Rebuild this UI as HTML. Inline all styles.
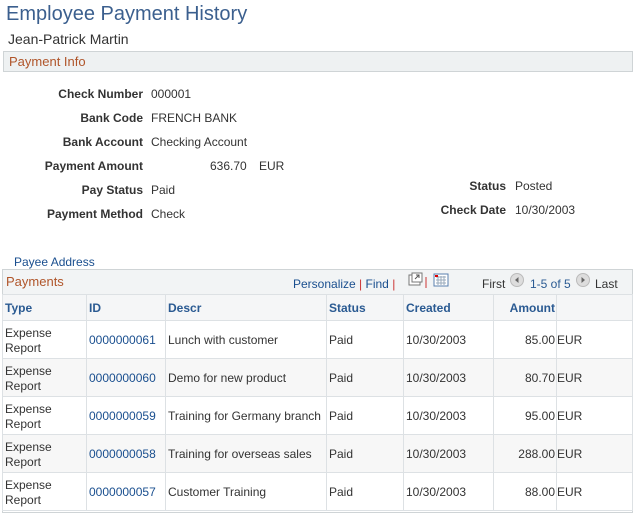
<!DOCTYPE html>
<html><head><style>
*{margin:0;padding:0;box-sizing:border-box}
body{width:637px;height:515px;background:#fff;font-family:"Liberation Sans",Arial,sans-serif;font-size:12px;color:#333;position:relative;overflow:hidden}
.a{position:absolute;white-space:nowrap}
.lb{font-weight:bold;text-align:right;width:143px;left:0}
.rl{font-weight:bold;text-align:right;width:506px;left:0}
.lnk{color:#1a4f8f}
table{position:absolute;left:2px;top:294px;border-collapse:collapse;width:631px}
td,th{border:1px solid #dde1e4;padding:0 1px 0 2px;font-size:12px;vertical-align:middle;text-align:left}
th{height:26px;color:#2a5a92;font-weight:bold;background:#f5f6f7;border-left-color:#e2e5e7}
td{height:38px;line-height:15px;padding-top:2px}
tr.g td{background:#f7f7f7}
</style></head><body>
<div class="a" style="left:6px;top:3px;font-size:20px;color:#3b5f8e">Employee Payment History</div>
<div class="a" style="left:8px;top:31px;font-size:14px;color:#333">Jean-Patrick Martin</div>
<div class="a" style="left:3px;top:51px;width:630px;height:21px;background:#eef1f2;border:1px solid #cfd4d6"></div>
<div class="a" style="left:9px;top:54px;font-size:13px;color:#b0552a">Payment Info</div>
<div class="a lb" style="top:87px">Check Number</div><div class="a" style="left:151px;top:87px">000001</div>
<div class="a lb" style="top:111px">Bank Code</div><div class="a" style="left:151px;top:111px">FRENCH BANK</div>
<div class="a lb" style="top:135px">Bank Account</div><div class="a" style="left:151px;top:135px">Checking Account</div>
<div class="a lb" style="top:159px">Payment Amount</div><div class="a" style="left:210px;top:159px">636.70</div><div class="a" style="left:259px;top:159px">EUR</div>
<div class="a lb" style="top:183px">Pay Status</div><div class="a" style="left:151px;top:183px">Paid</div>
<div class="a lb" style="top:207px">Payment Method</div><div class="a" style="left:151px;top:207px">Check</div>
<div class="a rl" style="top:179px">Status</div><div class="a" style="left:515px;top:179px">Posted</div>
<div class="a rl" style="top:203px">Check Date</div><div class="a" style="left:515px;top:203px">10/30/2003</div>
<div class="a lnk" style="left:14px;top:255px">Payee Address</div>
<div class="a" style="left:2px;top:269px;width:631px;height:244px;border:1px solid #cfd4d6"></div>
<div class="a" style="left:3px;top:270px;width:629px;height:24px;background:#f2f4f5"></div>
<div class="a" style="left:6px;top:274px;font-size:13px;color:#b0552a">Payments</div>
<div class="a lnk" style="left:293px;top:277px">Personalize <span style="color:#c33">|</span> Find <span style="color:#c33">|</span></div>
<svg class="a" style="left:406px;top:272px" width="48" height="16"><rect x="3" y="3" width="11" height="10" fill="#fff" stroke="#777"/><rect x="6" y="1" width="10" height="9" fill="#fff" stroke="#777"/><path d="M9 7l4-4M10 3h3v3" stroke="#555" fill="none"/><line x1="20" y1="5" x2="20" y2="16" stroke="#c33"/><rect x="28" y="2" width="14" height="12" fill="#fff" stroke="#5a7fae"/><path d="M30 5h10M30 8h10M30 11h10M32 4v9M35 4v9M38 4v9" stroke="#9ab"/><rect x="29" y="3" width="3" height="2" fill="#d00"/></svg>
<div class="a" style="left:482px;top:277px;color:#333">First</div>
<svg class="a" style="left:510px;top:273px" width="14" height="14"><circle cx="7" cy="7" r="6.5" fill="#ddd" stroke="#bbb"/><path d="M8.5 4v6L5 7z" fill="#666"/></svg>
<div class="a lnk" style="left:530px;top:277px;color:#2a5a92">1-5 of 5</div>
<svg class="a" style="left:576px;top:273px" width="14" height="14"><circle cx="7" cy="7" r="6.5" fill="#ddd" stroke="#bbb"/><path d="M5.5 4v6L9 7z" fill="#666"/></svg>
<div class="a" style="left:595px;top:277px">Last</div>
<table>
<tr><th style="width:84px">Type</th><th style="width:79px">ID</th><th style="width:161px">Descr</th><th style="width:77px">Status</th><th style="width:90px">Created</th><th style="width:63px;text-align:right">Amount</th><th></th></tr>
<tr><td>Expense<br>Report</td><td class="lnk">0000000061</td><td>Lunch with customer</td><td>Paid</td><td>10/30/2003</td><td style="text-align:right">85.00</td><td style="padding-left:0">EUR</td></tr>
<tr class="g"><td>Expense<br>Report</td><td class="lnk">0000000060</td><td>Demo for new product</td><td>Paid</td><td>10/30/2003</td><td style="text-align:right">80.70</td><td style="padding-left:0">EUR</td></tr>
<tr><td>Expense<br>Report</td><td class="lnk">0000000059</td><td>Training for Germany branch</td><td>Paid</td><td>10/30/2003</td><td style="text-align:right">95.00</td><td style="padding-left:0">EUR</td></tr>
<tr class="g"><td>Expense<br>Report</td><td class="lnk">0000000058</td><td>Training for overseas sales</td><td>Paid</td><td>10/30/2003</td><td style="text-align:right">288.00</td><td style="padding-left:0">EUR</td></tr>
<tr><td>Expense<br>Report</td><td class="lnk">0000000057</td><td>Customer Training</td><td>Paid</td><td>10/30/2003</td><td style="text-align:right">88.00</td><td style="padding-left:0">EUR</td></tr>
</table>
</body></html>
